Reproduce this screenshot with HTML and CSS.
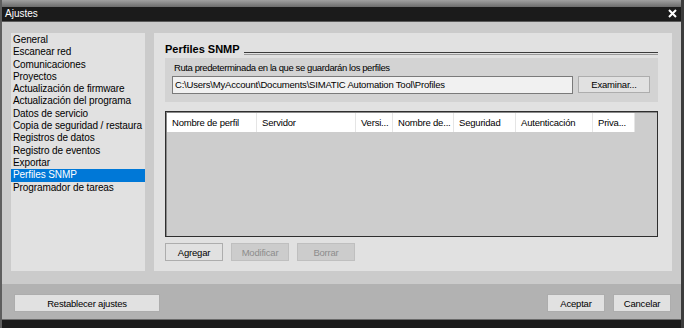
FILE: index.html
```html
<!DOCTYPE html>
<html lang="es">
<head>
    <meta charset="UTF-8">
    <title>Ajustes</title>
    <link rel="stylesheet" href="styles.css">
</head>
<body>
    <div class="window">
        <div class="frame-top"></div>
        <div class="titlebar">
            <span class="title">Ajustes</span>
            <svg class="close" width="9" height="9" viewBox="0 0 9 9">
                <path d="M1 1 L8 8 M8 1 L1 8" stroke="#fff" stroke-width="2"/>
            </svg>
        </div>

        <div class="main">
            <ul class="nav">
                <li>General</li>
                <li>Escanear red</li>
                <li>Comunicaciones</li>
                <li>Proyectos</li>
                <li>Actualización de firmware</li>
                <li>Actualización del programa</li>
                <li>Datos de servicio</li>
                <li>Copia de seguridad / restaura</li>
                <li>Registros de datos</li>
                <li>Registro de eventos</li>
                <li>Exportar</li>
                <li class="selected">Perfiles SNMP</li>
                <li>Programador de tareas</li>
            </ul>

            <div class="content">
                <div class="section-title">
                    <span>Perfiles SNMP</span>
                    <div class="rule"></div>
                </div>

                <div class="group">
                    <div class="group-label">Ruta predeterminada en la que se guardarán los perfiles</div>
                    <div class="path-row">
                        <div class="path-input">C:\Users\MyAccount\Documents\SIMATIC Automation Tool\Profiles</div>
                        <button class="btn btn-browse">Examinar...</button>
                    </div>
                </div>

                <div class="table">
                    <div class="table-head">
                        <div class="col c1">Nombre de perfil</div>
                        <div class="col c2">Servidor</div>
                        <div class="col c3">Versi...</div>
                        <div class="col c4">Nombre de...</div>
                        <div class="col c5">Seguridad</div>
                        <div class="col c6">Autenticación</div>
                        <div class="col c7">Priva...</div>
                    </div>
                </div>

                <div class="actions">
                    <button class="btn">Agregar</button>
                    <button class="btn disabled">Modificar</button>
                    <button class="btn disabled">Borrar</button>
                </div>
            </div>
        </div>

        <div class="footer">
            <button class="btn btn-reset">Restablecer ajustes</button>
            <div class="footer-right">
                <button class="btn">Aceptar</button>
                <button class="btn">Cancelar</button>
            </div>
        </div>
        <div class="frame-bottom"></div>
    </div>
</body>
</html>
```

FILE: styles.css
```css
body {
    margin: 0;
    font-family: "Liberation Sans", Arial, sans-serif;
    font-size: 10px;
    color: #000;
    background: #1c1c1c;
    overflow: hidden;
}
.window {
    width: 684px;
    height: 328px;
    box-sizing: border-box;
    border-left: 2px solid #5e5e5e;
    border-right: 3px solid #3c3c3c;
    display: flex;
    flex-direction: column;
    background: #cbcbcb;
}
.frame-top {
    height: 7px;
    background: linear-gradient(#a0a0a0, #6c6c6c);
}
.titlebar {
    height: 14px;
    background: #1b1b1b;
    border-bottom: 1px solid #5a5a5a;
    display: flex;
    align-items: center;
    justify-content: space-between;
    padding: 0 4px 0 3px;
}
.title {
    color: #fff;
    font-size: 10px;
    margin-top: -2px;
}
.close {
    margin-top: -2px;
}
.main {
    height: 262px;
    box-sizing: border-box;
    padding: 11px 9px 13px 9px;
    display: flex;
    gap: 9px;
}
.nav {
    width: 134px;
    margin: 0;
    padding: 1px 0 0 0;
    list-style: none;
    background: #e1e1e1;
    overflow: hidden;
}
.nav li {
    height: 12.3px;
    line-height: 12.3px;
    padding-left: 2px;
    white-space: nowrap;
    font-size: 10px;
    letter-spacing: -0.1px;
}
.nav li.selected {
    background: #0078d7;
    color: #fff;
}
.content {
    flex: 1;
    background: #e1e1e1;
    padding: 8px 14px 0 11px;
    display: flex;
    flex-direction: column;
}
.section-title {
    display: flex;
    align-items: flex-end;
    gap: 4px;
    height: 14px;
}
.section-title span {
    font-weight: bold;
    font-size: 11px;
    line-height: 12px;
}
.rule {
    flex: 1;
    height: 1px;
    border-top: 1px solid #3a3a3a;
    border-bottom: 1px solid #9a9a9a;
}
.group {
    margin-top: 3px;
    height: 44px;
    background: #d3d3d3;
    padding: 4px 8px 0 7px;
    box-sizing: border-box;
}
.group-label {
    padding-left: 2px;
    font-size: 9.5px;
    line-height: 12px;
    letter-spacing: -0.4px;
}
.path-row {
    display: flex;
    align-items: flex-start;
    gap: 5px;
    margin-top: 2px;
}
.path-input {
    flex: 1;
    height: 18px;
    box-sizing: border-box;
    background: #f1f1f1;
    border: 1px solid #7a7a7a;
    padding: 0 2px;
    line-height: 16px;
    font-size: 9.5px;
    letter-spacing: -0.2px;
    white-space: nowrap;
    overflow: hidden;
}
.btn {
    font-family: "Liberation Sans", Arial, sans-serif;
    font-size: 9.5px;
    letter-spacing: -0.2px;
    height: 18px;
    width: 58px;
    padding: 0;
    background: #e1e1e1;
    border: 1px solid #adadad;
    color: #000;
}
.btn-browse {
    width: 72px;
    height: 17px;
}
.btn.disabled {
    background: #cccccc;
    border-color: #bfbfbf;
    color: #8c8c8c;
}
.table {
    margin-top: 9px;
    height: 126px;
    box-sizing: border-box;
    background: #cdcdcd;
    border: 1px solid #2e2e2e;
    box-shadow: inset 1px 1px 0 #8a8a8a;
    padding: 1px 0 0 1px;
}
.table-head {
    display: flex;
    height: 19px;
}
.col {
    background: #fff;
    border-right: 1px solid #e5e5e5;
    box-sizing: border-box;
    padding-left: 5px;
    line-height: 19px;
    font-size: 9.5px;
    letter-spacing: -0.2px;
    white-space: nowrap;
    overflow: hidden;
}
.c1 { width: 90px; }
.c2 { width: 99px; }
.c3 { width: 37px; }
.c4 { width: 61px; }
.c5 { width: 62px; }
.c6 { width: 77px; }
.c7 { width: 42px; }
.actions {
    display: flex;
    gap: 8px;
    margin-top: 6px;
}
.footer {
    height: 35px;
    box-sizing: border-box;
    background: #b2b2b2;
    padding: 10px 10px 0 12px;
    display: flex;
    justify-content: space-between;
    align-items: flex-start;
}
.btn-reset {
    width: 146px;
}
.footer-right {
    display: flex;
    gap: 8px;
}
.frame-bottom {
    height: 9px;
    background: #1c1c1c;
    border-top: 1px solid #6a6a6a;
    box-sizing: border-box;
}
```
